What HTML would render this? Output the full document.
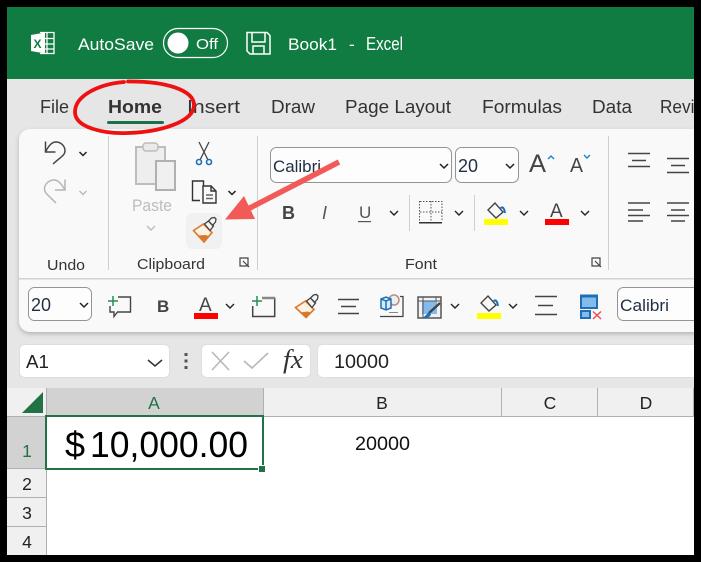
<!DOCTYPE html>
<html><head><meta charset="utf-8"><style>
html,body{margin:0;padding:0;background:#000;width:701px;height:562px;overflow:hidden}
svg{display:block}
text{font-family:"Liberation Sans",sans-serif}
</style></head><body>
<svg xmlns="http://www.w3.org/2000/svg" width="701" height="562" viewBox="0 0 701 562">
<defs>
<filter id="sh" x="-5%" y="-5%" width="110%" height="115%"><feDropShadow dx="0" dy="2" stdDeviation="2.5" flood-color="#000" flood-opacity=".22"/></filter>
<clipPath id="c"><rect x="7" y="7" width="687" height="548"/></clipPath>
</defs>
<rect width="701" height="562" fill="#000"/>
<g clip-path="url(#c)">
<rect x="7" y="7" width="687" height="548" fill="#e6e6e6"/>
<rect x="7" y="7" width="687" height="72" fill="#107c41"/>

<!-- title bar -->
<g fill="none" stroke="#fff" stroke-width="1.300">
<path d="M40 32.500h14v21H40M44 38.500h10M44 44h10M44 49h10M47 32v21"/>
</g>
<path d="M31 35l14-2.500v21L31 51z" fill="#fff"/>
<text x="33.500" y="48" font-size="12" font-weight="bold" fill="#107c41">X</text>
<text x="78" y="50" font-size="17" fill="#fff" textLength="76" lengthAdjust="spacingAndGlyphs">AutoSave</text>
<rect x="163.500" y="28.500" width="64" height="29" rx="14.500" fill="none" stroke="#fff" stroke-width="1.200"/>
<circle cx="178" cy="43" r="10.500" fill="#fff"/>
<text x="196" y="49" font-size="15" fill="#fff" textLength="22" lengthAdjust="spacingAndGlyphs">Off</text>
<g fill="none" stroke="#fff" stroke-width="1.500">
<path d="M247 32.500h20l3 3v18.500h-20l-3-3z"/><path d="M252 33v9h13v-9M253 54v-8h11v8"/>
</g>
<text x="288" y="50" font-size="17" fill="#fff" textLength="49" lengthAdjust="spacingAndGlyphs">Book1</text>
<text x="349" y="50" font-size="17" fill="#fff">-</text>
<text x="366" y="50" font-size="18" fill="#fff" textLength="37" lengthAdjust="spacingAndGlyphs">Excel</text>

<!-- tabs -->
<g font-size="18" fill="#333">
<text x="40" y="113" textLength="29" lengthAdjust="spacingAndGlyphs">File</text>
<text x="108" y="113" font-weight="bold" textLength="54" lengthAdjust="spacingAndGlyphs">Home</text>
<text x="187" y="113" textLength="53" lengthAdjust="spacingAndGlyphs">Insert</text>
<text x="271" y="113" textLength="44" lengthAdjust="spacingAndGlyphs">Draw</text>
<text x="345" y="113" textLength="106" lengthAdjust="spacingAndGlyphs">Page Layout</text>
<text x="482" y="113" textLength="80" lengthAdjust="spacingAndGlyphs">Formulas</text>
<text x="592" y="113" textLength="40" lengthAdjust="spacingAndGlyphs">Data</text>
<text x="660" y="113" textLength="44" lengthAdjust="spacingAndGlyphs">Revie</text>
</g>
<rect x="107" y="121" width="57" height="3" rx="1.500" fill="#1f7048"/>

<!-- ribbon -->
<rect x="19" y="129" width="700" height="203" rx="11" fill="#f9f9f9" filter="url(#sh)"/>
<rect x="19" y="278" width="675" height="1.500" fill="#d2d2d2"/>
<g fill="#cfcfcf">
<rect x="108" y="136" width="1" height="134"/><rect x="257" y="136" width="1" height="134"/><rect x="608" y="136" width="1" height="134"/>
<rect x="409" y="195" width="1" height="36"/><rect x="474" y="195" width="1" height="36"/>
</g>

<!-- undo -->
<g fill="none" stroke="#444" stroke-width="1.500">
<path d="M45.500 141.500v10.500h10"/><path d="M45.500 152C49 145 52 142 56 142C61 142 65 146 65 151C65 155 62 156 53 164"/>
</g>
<g fill="none" stroke="#b5b5b5" stroke-width="1.500">
<path d="M65 179.500v10.500h-10"/><path d="M65 190C61 183 58 180 54 180C49 180 44.500 184 44.500 189C44.500 193 48 195 56 203"/>
</g>
<path d="M79.500 152l3.500 3.500 3.500-3.500" fill="none" stroke="#222" stroke-width="1.500"/>
<path d="M79.500 191l3.500 3.500 3.500-3.500" fill="none" stroke="#bbb" stroke-width="1.500"/>
<text x="47" y="270" font-size="14.500" fill="#333" textLength="38" lengthAdjust="spacingAndGlyphs">Undo</text>

<!-- paste -->
<rect x="136" y="147" width="29" height="37" fill="#eee" stroke="#bdbdbd" stroke-width="2"/>
<rect x="143" y="143" width="15" height="8" rx="3" fill="#eaeaea" stroke="#bdbdbd" stroke-width="1.500"/>
<rect x="156" y="161" width="19" height="29" fill="#f0f0f0" stroke="#b0b0b0" stroke-width="2"/>
<text x="132" y="211" font-size="16.500" fill="#bdbdbd" textLength="40" lengthAdjust="spacingAndGlyphs">Paste</text>
<path d="M147 226l4 4 4-4" fill="none" stroke="#bbb" stroke-width="1.400"/>
<text x="137" y="269" font-size="14.500" fill="#333" textLength="68" lengthAdjust="spacingAndGlyphs">Clipboard</text>
<!-- scissors -->
<g fill="none">
<path d="M199 142l9 18M209 142l-9 18" stroke="#444" stroke-width="1.300"/>
<circle cx="199" cy="162" r="2.500" stroke="#1a70b8" stroke-width="1.600"/><circle cx="209" cy="162" r="2.500" stroke="#1a70b8" stroke-width="1.600"/>
</g>
<!-- copy -->
<g fill="none" stroke="#333" stroke-width="1.400">
<path d="M200 200.500h-7.500v-19.500h11v5"/><path fill="#f9f9f9" d="M203 186h8l5 5v12h-13zM211 186v5h5"/><path stroke="#666" d="M206 195h7M206 198.500h7"/>
</g>
<path d="M228.500 191l3.500 3.500 3.500-3.500" fill="none" stroke="#222" stroke-width="1.500"/>
<!-- painter highlighted -->
<rect x="186" y="213" width="36" height="36" rx="6" fill="#f1f1f1"/>
<path d="M193.500 230.500l10-6.500 8.500 8.500-8 9.500z" fill="#fdf1e4" stroke="#d9782a" stroke-width="1.600"/>
<path d="M198 235.500l6.500 5.500 4-5-3-1z" fill="#d9782a"/>
<path d="M204.500 224l4-3 5 5-3.500 4.500zM208.500 221l3-3 3-.5 1.500 1.500-.5 3-3 3.500z" fill="#f4f4f4" stroke="#444" stroke-width="1.300"/>
<path d="M240 258h8v8h-8zM243 261l6 6" fill="none" stroke="#444" stroke-width="1.200"/>

<!-- font -->
<rect x="270.500" y="147.500" width="181" height="35" rx="6" fill="#fdfdfd" stroke="#949494"/>
<text x="273" y="172" font-size="17" fill="#1f2f44" textLength="48" lengthAdjust="spacingAndGlyphs">Calibri</text>
<path d="M440 164l4 4 4-4" fill="none" stroke="#222" stroke-width="1.500"/>
<rect x="455.500" y="147.500" width="63" height="35" rx="6" fill="#fdfdfd" stroke="#949494"/>
<text x="458" y="172" font-size="18" fill="#1f2f44" textLength="20" lengthAdjust="spacingAndGlyphs">20</text>
<path d="M506 164l4 4 4-4" fill="none" stroke="#222" stroke-width="1.500"/>
<text x="529" y="172" font-size="25" fill="#444" textLength="17" lengthAdjust="spacingAndGlyphs">A</text>
<path d="M548 159l3-3 3 3" fill="none" stroke="#1a86c8" stroke-width="1.400"/>
<text x="570" y="172" font-size="20" fill="#444" textLength="13" lengthAdjust="spacingAndGlyphs">A</text>
<path d="M584 155l3 3 3-3" fill="none" stroke="#1a86c8" stroke-width="1.400"/>

<text x="282" y="219" font-size="18" font-weight="bold" fill="#444">B</text>
<text x="322" y="219" font-size="18" font-style="italic" fill="#555">I</text>
<text x="359" y="218" font-size="17" fill="#555">U</text>
<rect x="358" y="221" width="13" height="1.200" fill="#555"/>
<path d="M390 211l4 4 4-4" fill="none" stroke="#222" stroke-width="1.400"/>
<g fill="none" stroke="#555" stroke-width="1" stroke-dasharray="1.500 1.500">
<path d="M420 201.500h22v20M419.500 201v21M431 201v21M420 212h22"/>
</g>
<rect x="419" y="222" width="23" height="1.500" fill="#333"/>
<path d="M455 211l4 4 4-4" fill="none" stroke="#222" stroke-width="1.400"/>
<path d="M488 210l7-7 8 9-7 6z" fill="#f9f9f9" stroke="#444" stroke-width="1.400"/>
<path d="M500 209c2-3 4-2 5 4" fill="none" stroke="#1a70b8" stroke-width="2"/>
<rect x="484" y="219" width="24" height="6" fill="#ff0"/>
<path d="M520 211l4 4 4-4" fill="none" stroke="#222" stroke-width="1.400"/>
<text x="550" y="217" font-size="19" fill="#444">A</text>
<rect x="545" y="219" width="24" height="6" fill="#f00"/>
<path d="M581 211l4 4 4-4" fill="none" stroke="#222" stroke-width="1.400"/>
<text x="405" y="269" font-size="14.500" fill="#333" textLength="32" lengthAdjust="spacingAndGlyphs">Font</text>
<path d="M592 258h8v8h-8zM595 261l6 6" fill="none" stroke="#444" stroke-width="1.200"/>

<!-- align -->
<g stroke="#444" stroke-width="1.500">
<path d="M628 153.500h22M632 160.500h14M628 166.500h22"/>
<path d="M667 158.500h22M671 165.500h14M667 172.500h22"/>
<path d="M628 203h22M628 210h15M628 215.500h22M628 221h15"/>
<path d="M667 203h22M671 210h14M667 215.500h22M671 221h14"/>
</g>

<!-- QAT row -->
<rect x="28.500" y="287.500" width="63" height="33" rx="6" fill="#fdfdfd" stroke="#949494"/>
<text x="31" y="311" font-size="18" fill="#1f2f44" textLength="20" lengthAdjust="spacingAndGlyphs">20</text>
<path d="M80 303l4 4 4-4" fill="none" stroke="#222" stroke-width="1.500"/>
<path d="M118 297h12.500v15h-13l-3.500 4.500v-4.500h-4v-6" fill="none" stroke="#444" stroke-width="1.400"/>
<path d="M108 301h10M113 296v10" stroke="#2a8a5a" stroke-width="1.500"/>
<text x="157" y="312" font-size="17" font-weight="bold" fill="#444">B</text>
<text x="199" y="311" font-size="19" fill="#444">A</text>
<rect x="194" y="313" width="24" height="6" fill="#f00"/>
<path d="M226 304l4 4 4-4" fill="none" stroke="#222" stroke-width="1.400"/>
<path d="M252.700 306v10.500h22v-19" fill="none" stroke="#444" stroke-width="1.500"/>
<path d="M262 298h13" stroke="#888" stroke-width="2.500"/>
<path d="M252 301h10M257 296v10" stroke="#2a8a5a" stroke-width="1.500"/>
<path d="M295.500 307.500l10-6.500 8.500 8.500-8 8z" fill="#fdf1e4" stroke="#d9782a" stroke-width="1.600"/>
<path d="M300 312.500l6.500 5 4-5-3-1z" fill="#d9782a"/>
<path d="M306.500 301l4-3 5 5-3.500 4.500zM310.500 298l3-3 3-.5 1.500 1.500-.5 3-3 3.500z" fill="#f4f4f4" stroke="#444" stroke-width="1.300"/>
<g stroke="#444" stroke-width="1.500"><path d="M338 299.500h21M341 306.500h15M338 313.500h21"/></g>
<!-- wrap icon -->
<path d="M380 316.500h23v-20h-3" fill="none" stroke="#444" stroke-width="1.300"/>
<path d="M389 312.500h9" stroke="#888" stroke-width="1"/>
<circle cx="394" cy="300" r="5" fill="#eee" stroke="#b09088" stroke-width="1.500"/>
<path d="M381 299l5-2 5 2v9l-5 2-5-2zM386 301v9M381 299l5 2 5-2" fill="#dbeaf7" stroke="#1a70b8" stroke-width="1.500"/>
<!-- format -->
<rect x="418" y="297" width="23" height="21" fill="#f2f2f2" stroke="#555" stroke-width="1.500"/>
<rect x="422" y="301" width="15" height="13" fill="#83bcec"/>
<path d="M418 301h23M423 297v21M436 297v4" stroke="#555" stroke-width="1"/>
<path d="M440 303l-11 10" stroke="#444" stroke-width="2.500"/>
<path d="M429 312c-2 1-2 3-6 5.500 3 1 7 0 8-3z" fill="#1a70b8"/>
<path d="M451 304l4 4 4-4" fill="none" stroke="#222" stroke-width="1.400"/>
<path d="M481 303l7-7 8 9-7 6z" fill="#f9f9f9" stroke="#444" stroke-width="1.400"/>
<path d="M493 302c2-3 4-2 5 4" fill="none" stroke="#1a70b8" stroke-width="2"/>
<rect x="477" y="313" width="24" height="6" fill="#ff0"/>
<path d="M509 304l4 4 4-4" fill="none" stroke="#222" stroke-width="1.400"/>
<g stroke="#444" stroke-width="1.500"><path d="M535 296.500h22M538 305.500h15M535 314.500h22"/></g>
<!-- delete row icon -->
<rect x="581" y="296" width="16" height="12" fill="#83bcec" stroke="#1e6fb5" stroke-width="2"/>
<path d="M580 296h18" stroke="#1e6fb5" stroke-width="3"/>
<rect x="581" y="311" width="9" height="7" fill="#83bcec" stroke="#1e6fb5" stroke-width="2"/>
<path d="M593 311.500l8 7.500M601 311.500l-8 7.500" stroke="#e8504a" stroke-width="1.500"/>
<rect x="617.500" y="287.500" width="90" height="33" rx="6" fill="#fdfdfd" stroke="#949494"/>
<text x="620" y="311" font-size="17" fill="#1f2f44" textLength="49" lengthAdjust="spacingAndGlyphs">Calibri</text>

<!-- red arrow -->
<path d="M339 162L244 211" stroke="#f25a57" stroke-width="5.500" fill="none"/>
<path d="M225 219.500L244 196L255 219z" fill="#f25a57"/>

<!-- red circle -->
<path d="M124 82C100 84 75 95 75 112C75 128 105 134 128 133C160 132 194 122 194 105C194 90 165 81 128 81.500" fill="none" stroke="#ee1111" stroke-width="3.800" stroke-linecap="round"/>

<!-- formula bar -->
<rect x="19.500" y="344.500" width="150" height="33" rx="5" fill="#fff" stroke="#dedede"/>
<text x="26" y="368" font-size="18" fill="#222" textLength="23" lengthAdjust="spacingAndGlyphs">A1</text>
<path d="M148 360l7 6 7-6" fill="none" stroke="#333" stroke-width="1.500"/>
<g fill="#555"><rect x="184.500" y="353" width="3" height="3"/><rect x="184.500" y="359.500" width="3" height="3"/><rect x="184.500" y="366" width="3" height="3"/></g>
<rect x="201.500" y="344.500" width="109" height="33" rx="5" fill="#fff" stroke="#dedede"/>
<path d="M212 352l17 18M229 352l-17 18" stroke="#b8b8b8" stroke-width="1.600"/>
<path d="M244 361l8 7 16-15" fill="none" stroke="#b8b8b8" stroke-width="1.600"/>
<text x="283" y="368" font-size="26" font-style="italic" fill="#333" style="font-family:'Liberation Serif',serif" textLength="20" lengthAdjust="spacingAndGlyphs">fx</text>
<rect x="317.500" y="344.500" width="400" height="33" rx="5" fill="#fff" stroke="#dedede"/>
<text x="334" y="368" font-size="19.500" fill="#222" textLength="55" lengthAdjust="spacingAndGlyphs">10000</text>

<!-- sheet -->
<rect x="7" y="388" width="687" height="167" fill="#fff"/>
<rect x="7" y="388" width="687" height="28" fill="#f0f0f0"/>
<rect x="7" y="416" width="39" height="139" fill="#f0f0f0"/>
<rect x="46" y="388" width="217" height="28" fill="#d2d2d2"/>
<rect x="7" y="416" width="39" height="52" fill="#d2d2d2"/>
<path d="M43 392v21H22z" fill="#217346"/>
<g fill="#b0b0b0">
<rect x="7" y="416" width="687" height="1"/>
<rect x="46" y="388" width="1" height="167"/>
<rect x="263" y="388" width="1" height="28"/>
<rect x="501" y="388" width="1" height="28"/>
<rect x="597" y="388" width="1" height="28"/>
<rect x="693" y="388" width="1" height="28"/>
<rect x="7" y="468" width="39" height="1"/><rect x="7" y="497" width="39" height="1"/><rect x="7" y="526" width="39" height="1"/>
</g>
<g font-size="17.500" text-anchor="middle" fill="#222">
<text x="154" y="409" fill="#217346">A</text>
<text x="382" y="409">B</text>
<text x="550" y="409">C</text>
<text x="646" y="409">D</text>
<text x="27" y="457" fill="#217346">1</text>
<text x="27" y="490">2</text>
<text x="27" y="519">3</text>
<text x="27" y="548">4</text>
</g>
<rect x="46" y="416" width="217" height="53" fill="#fff" stroke="#217346" stroke-width="2"/>
<rect x="258.500" y="465.500" width="7" height="7" fill="#217346" stroke="#fff" stroke-width="1"/>
<text x="65" y="457" font-size="36" fill="#000">$</text>
<text x="90" y="457" font-size="36" fill="#000" textLength="158" lengthAdjust="spacingAndGlyphs">10,000.00</text>
<text x="355" y="450" font-size="19.500" fill="#111" textLength="55" lengthAdjust="spacingAndGlyphs">20000</text>
</g>
</svg>
</body></html>
